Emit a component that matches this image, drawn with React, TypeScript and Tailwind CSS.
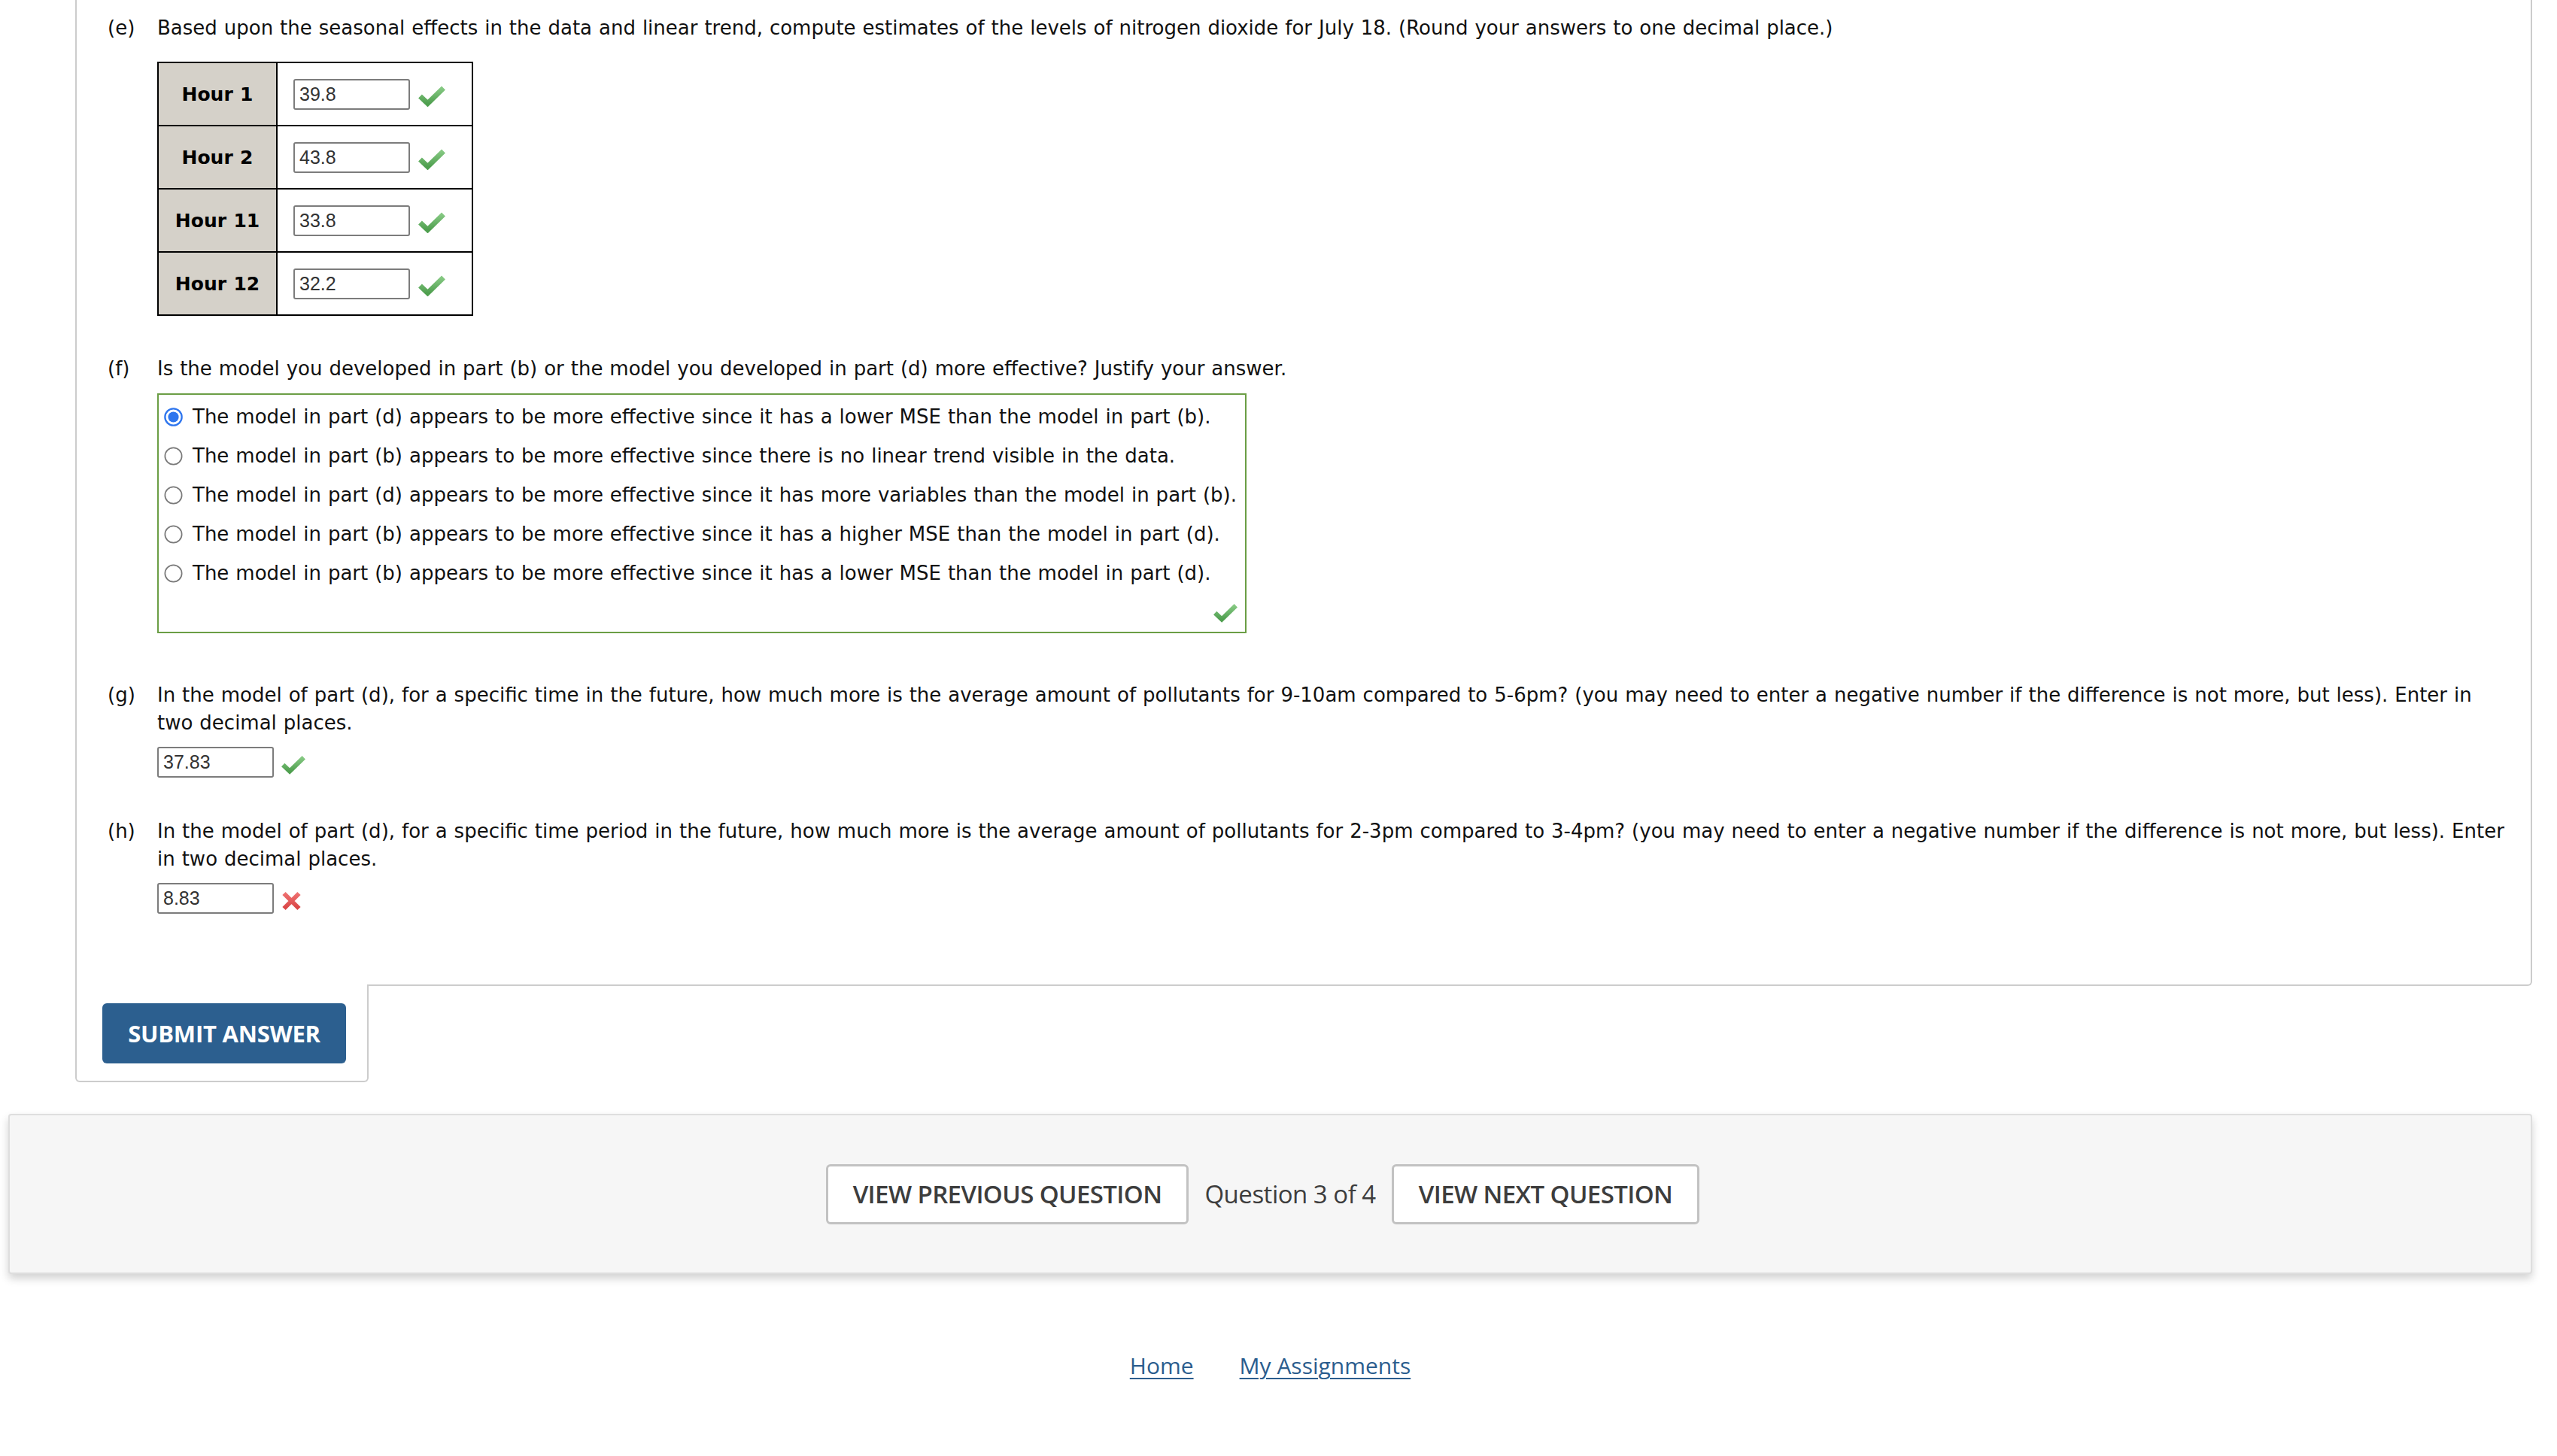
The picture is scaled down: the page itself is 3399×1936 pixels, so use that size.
import React from 'react';

// green tick used for correct answers
const Tick = ({ className = '' }: { className?: string }) => (
  <svg viewBox="0 0 36 28" className={className}>
    <path d="M2.5 14 L12.5 23.5 L33.5 3" fill="none" stroke="url(#okGrad)" strokeWidth="7" />
  </svg>
);

const Cross = ({ className = '' }: { className?: string }) => (
  <svg viewBox="0 0 27 26" className={className}>
    <path d="M3.5 3 L23.5 23 M23.5 3 L3.5 23" fill="none" stroke="url(#badGrad)" strokeWidth="6" />
  </svg>
);

const Radio = ({ on = false }: { on?: boolean }) => (
  <svg viewBox="0 0 26 26" className="w-[25px] h-[25px] shrink-0">
    <circle cx="13" cy="13" r="11.6" fill="white" stroke={on ? '#2f76ee' : '#7a7a7a'} strokeWidth={on ? 2.4 : 1.8} />
    {on && <circle cx="13" cy="13" r="7.4" fill="#2f76ee" />}
  </svg>
);

const Field = ({ value }: { value: string }) => (
  <input
    readOnly
    defaultValue={value}
    className="w-[155px] h-[41px] border-2 border-[#7c7c7c] rounded-[3px] bg-white pl-[6px] font-['Liberation_Sans',Arial,sans-serif] text-[25px] text-[#333] outline-none [word-spacing:0px]"
  />
);

const Part = ({ label, className = '', children }: { label: string; className?: string; children: React.ReactNode }) => (
  <div className={`flex ${className}`}>
    <div className="w-[66px] shrink-0">{label}</div>
    <div className="flex-1 min-w-0">{children}</div>
  </div>
);

const hours = [
  { label: 'Hour 1', value: '39.8' },
  { label: 'Hour 2', value: '43.8' },
  { label: 'Hour 11', value: '33.8' },
  { label: 'Hour 12', value: '32.2' },
];

const options = [
  { text: 'The model in part (d) appears to be more effective since it has a lower MSE than the model in part (b).', on: true },
  { text: 'The model in part (b) appears to be more effective since there is no linear trend visible in the data.' },
  { text: 'The model in part (d) appears to be more effective since it has more variables than the model in part (b).' },
  { text: 'The model in part (b) appears to be more effective since it has a higher MSE than the model in part (d).' },
  { text: 'The model in part (b) appears to be more effective since it has a lower MSE than the model in part (d).' },
];

export default function App() {
  return (
    <div className="min-h-screen bg-white pb-[80px]">
      <svg width="0" height="0" className="absolute">
        <defs>
          <linearGradient id="okGrad" x1="0" y1="0" x2="0" y2="1">
            <stop offset="0" stopColor="#86c983" />
            <stop offset="1" stopColor="#4f9f4f" />
          </linearGradient>
          <linearGradient id="badGrad" x1="0" y1="0" x2="0" y2="1">
            <stop offset="0" stopColor="#ee7070" />
            <stop offset="1" stopColor="#d94545" />
          </linearGradient>
        </defs>
      </svg>

      <div className="pl-[11px] pr-[33px]">
        <div className="ml-[89px]">
          {/* question card */}
          <div className="border-2 border-t-0 border-[#cccccc] rounded-br-[6px] pl-[41px] pr-[8px] pt-[19px] pb-[94px] font-['DejaVu_Sans',Verdana,sans-serif] text-[26px] leading-[37px] text-[#111] [word-spacing:0.7px]">
            <Part label="(e)">
              Based upon the seasonal effects in the data and linear trend, compute estimates of the levels of nitrogen dioxide for July 18. (Round your answers to one decimal place.)
              <div className="mt-[26px] w-fit grid grid-cols-[156px_258px] gap-[2px] p-[2px] bg-black">
                {hours.map((h) => (
                  <React.Fragment key={h.label}>
                    <div className="h-[82px] bg-[#d5d1c9] flex items-center justify-center font-bold text-[25px] text-black">
                      {h.label}
                    </div>
                    <div className="h-[82px] bg-white flex items-center pl-[21px] gap-[11px]">
                      <Field value={h.value} />
                      <Tick className="w-[36px] h-[28px] mt-[6px]" />
                    </div>
                  </React.Fragment>
                ))}
              </div>
            </Part>

            <Part label="(f)" className="mt-[52px]">
              Is the model you developed in part (b) or the model you developed in part (d) more effective? Justify your answer.
              <div className="mt-[14px] w-[1448px] border-2 border-[#6b9e45] pt-[3px] pl-[7px] pr-[10px] pb-[12px]">
                {options.map((o) => (
                  <div key={o.text} className="h-[52px] flex items-center gap-[13px] whitespace-nowrap">
                    <Radio on={o.on} />
                    <span>{o.text}</span>
                  </div>
                ))}
                <div className="mt-[14px] flex justify-end">
                  <Tick className="w-[32px] h-[26px]" />
                </div>
              </div>
            </Part>

            <Part label="(g)" className="mt-[64px]">
              <div className="whitespace-nowrap">
                In the model of part (d), for a specific time in the future, how much more is the average amount of pollutants for 9-10am compared to 5-6pm? (you may need to enter a negative number if the difference is not more, but less). Enter in
              </div>
              <div>two decimal places.</div>
              <div className="mt-[13px] flex items-center gap-[10px]">
                <Field value="37.83" />
                <Tick className="w-[32px] h-[26px] mt-[6px]" />
              </div>
            </Part>

            <Part label="(h)" className="mt-[53px]">
              <div className="whitespace-nowrap">
                In the model of part (d), for a specific time period in the future, how much more is the average amount of pollutants for 2-3pm compared to 3-4pm? (you may need to enter a negative number if the difference is not more, but less). Enter
              </div>
              <div>in two decimal places.</div>
              <div className="mt-[13px] flex items-center gap-[10px]">
                <Field value="8.83" />
                <Cross className="w-[27px] h-[26px] mt-[6px]" />
              </div>
            </Part>
          </div>

          {/* submit tab */}
          <div className="relative -mt-[2px] w-[390px] bg-white border-2 border-t-0 border-[#cccccc] rounded-b-[6px] pl-[34px] pt-[25px] pb-[23px]">
            <button className="w-[324px] h-[80px] rounded-[6px] bg-[#2c5f8f] text-white font-['Open_Sans',sans-serif] font-bold text-[31px] tracking-[-0.2px]">
              SUBMIT ANSWER
            </button>
          </div>
        </div>

        {/* question navigation */}
        <div className="mt-[42px] h-[213px] bg-[#f6f6f6] border-2 border-[#dedede] rounded-[4px] shadow-[0_6px_12px_rgba(0,0,0,0.18)] flex items-center justify-center pr-[20px] font-['Open_Sans',sans-serif] text-[#3d3d3d]">
          <button className="h-[80px] px-[33px] bg-white border-[3px] border-[#c2c2c2] rounded-[6px] font-semibold text-[33px] tracking-[-0.6px]">
            VIEW PREVIOUS QUESTION
          </button>
          <span className="mx-[21px] text-[33px] tracking-[-0.5px]">Question 3 of 4</span>
          <button className="h-[80px] px-[33px] bg-white border-[3px] border-[#c2c2c2] rounded-[6px] font-semibold text-[33px] tracking-[-0.6px]">
            VIEW NEXT QUESTION
          </button>
        </div>

        <div className="mt-[102px] flex justify-center gap-[61px] font-['Open_Sans',sans-serif] text-[30px] leading-[40px] text-[#2b5d8e]">
          <a href="#" className="underline underline-offset-[5px] decoration-2">Home</a>
          <a href="#" className="underline underline-offset-[5px] decoration-2">My Assignments</a>
        </div>
      </div>
    </div>
  );
}
